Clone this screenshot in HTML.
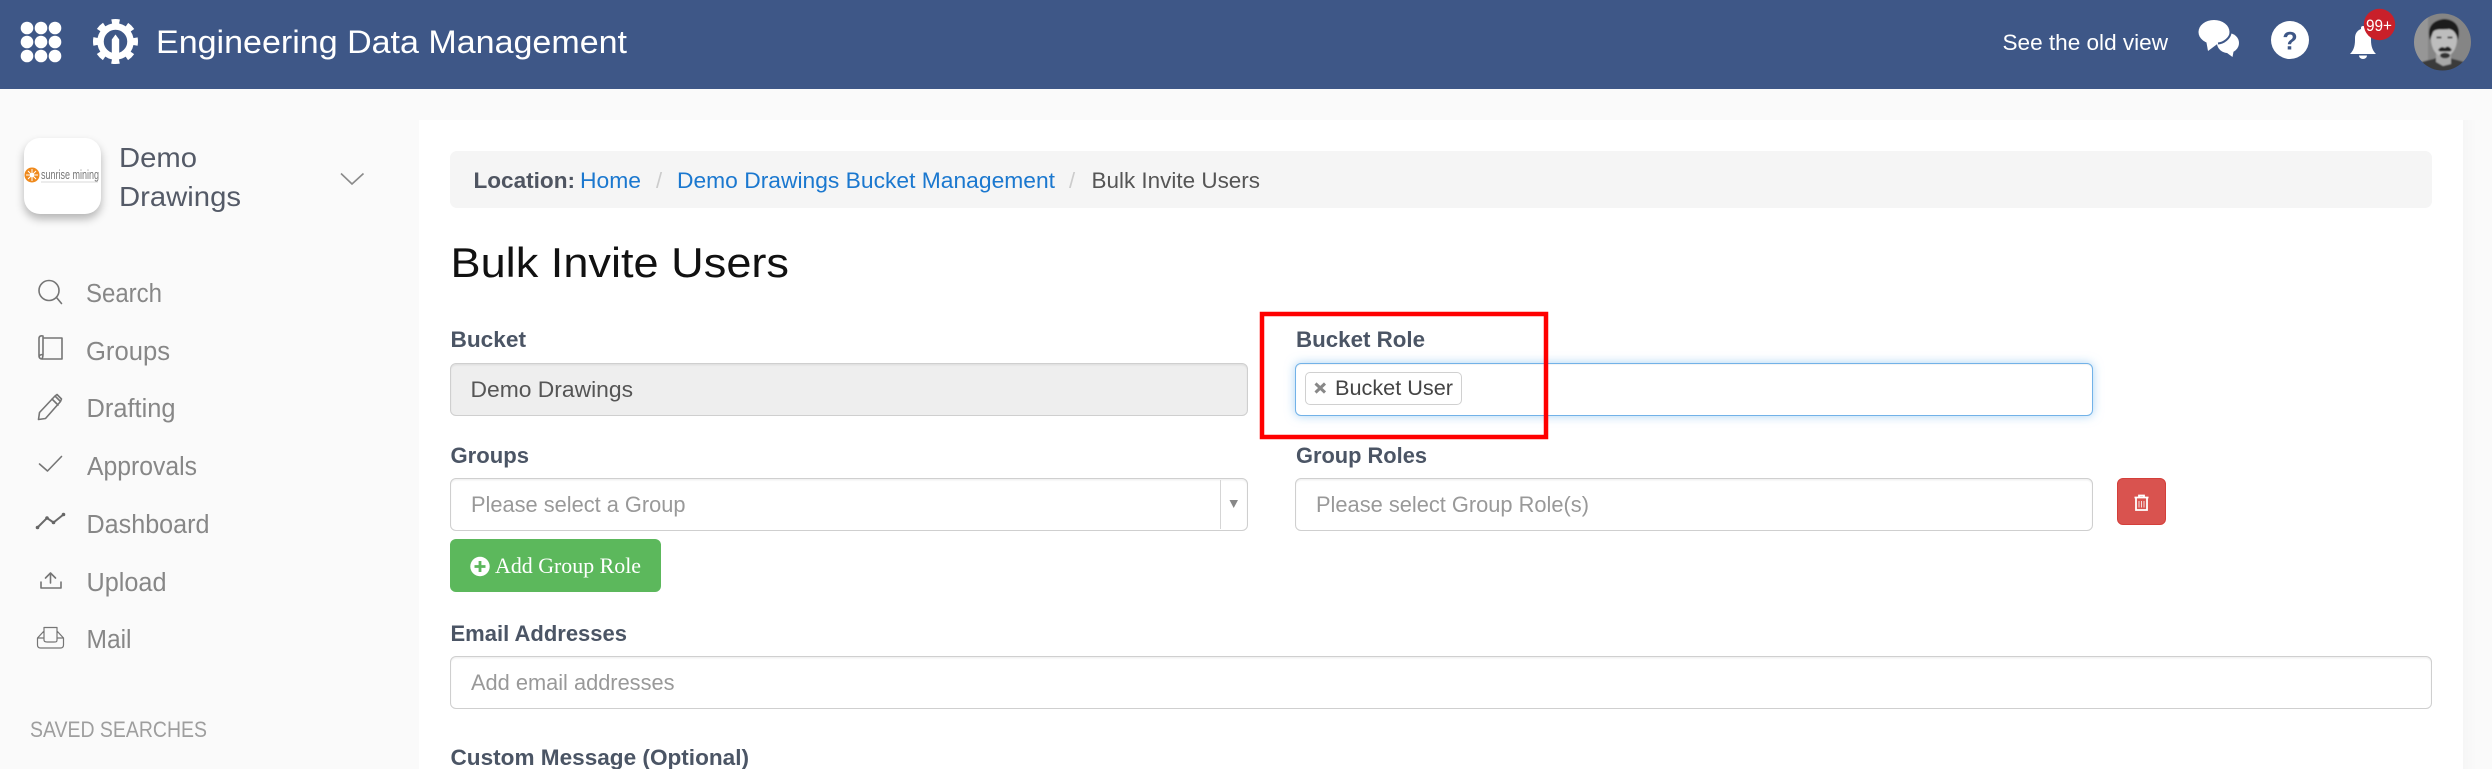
<!DOCTYPE html>
<html lang="en"><head><meta charset="utf-8"><title>Bulk Invite Users</title>
<style>
html,body{margin:0;padding:0;width:2492px;height:769px;overflow:hidden;background:#fafafa}
.b{position:absolute;box-sizing:border-box}
.in{background:#fff;border:1.5px solid #cfcfcf;border-radius:6px;box-shadow:inset 0 1.5px 1.5px rgba(0,0,0,.06)}
svg{position:absolute;left:0;top:0}
text{font-family:"Liberation Sans",sans-serif;white-space:pre}
.l{font-weight:700;font-size:22px;fill:#4b5565}
.n{font-size:25.5px;fill:#878787}
.t{font-size:22px;fill:#555}
.p{font-size:22px;fill:#999}
.a{font-size:22px;fill:#1b78cf}
.ic{fill:none;stroke:#757575;stroke-width:1.6;stroke-linecap:round;stroke-linejoin:round}
</style></head><body>
<div class="b" style="left:0;top:0;width:2492px;height:89px;background:#3e5787"></div>
<div class="b" style="left:419px;top:120px;width:2044px;height:649px;background:#fff"></div>
<div class="b" style="left:2463px;top:120px;width:14px;height:649px;background:linear-gradient(90deg,#f6f6f6,#fafafa)"></div>
<div class="b" style="left:450px;top:151px;width:1982px;height:57px;background:#f5f5f5;border-radius:7px"></div>
<div class="b in" style="left:450px;top:363px;width:798px;height:53px;background:#eee"></div>
<div class="b in" style="left:1295px;top:363px;width:798px;height:53px;border-color:#72b2e8;box-shadow:inset 0 1px 1px rgba(0,0,0,.05),0 0 10px rgba(102,175,233,.55)"></div>
<div class="b" style="left:1305px;top:372px;width:157px;height:33px;background:#fff;border:1.5px solid #d0d0d0;border-radius:5px"></div>
<div class="b in" style="left:450px;top:478px;width:798px;height:53px"></div>
<div class="b" style="left:1220px;top:480px;width:1px;height:49px;background:#d5d5d5"></div>
<div class="b in" style="left:1295px;top:478px;width:798px;height:53px"></div>
<div class="b" style="left:2117px;top:478px;width:49px;height:47px;background:#d9534f;border:1.5px solid #d43f3a;border-radius:6px"></div>
<div class="b" style="left:450px;top:539px;width:211px;height:53px;background:#5cb85c;border-radius:6px"></div>
<div class="b in" style="left:450px;top:656px;width:1982px;height:53px"></div>
<div class="b" style="left:24px;top:138px;width:77px;height:76px;background:#fff;border-radius:16px;box-shadow:0 5px 9px rgba(0,0,0,.28)"></div>

<svg width="2492" height="769" viewBox="0 0 2492 769" xmlns="http://www.w3.org/2000/svg">
<defs><clipPath id="av"><circle cx="2442.5" cy="42" r="28.5"/></clipPath>
<filter id="bl" x="-5%" y="-5%" width="110%" height="110%"><feGaussianBlur stdDeviation="0.8"/></filter></defs>
<!-- app grid -->
<g fill="#fff">
<circle cx="27" cy="28" r="6.3"/><circle cx="41" cy="28" r="6.3"/><circle cx="55" cy="28" r="6.3"/>
<circle cx="27" cy="42" r="6.3"/><circle cx="41" cy="42" r="6.3"/><circle cx="55" cy="42" r="6.3"/>
<circle cx="27" cy="56" r="6.3"/><circle cx="41" cy="56" r="6.3"/><circle cx="55" cy="56" r="6.3"/>
</g>
<!-- gear logo -->
<circle cx="115.5" cy="41.5" r="20" fill="none" stroke="#fff" stroke-width="5" stroke-dasharray="7.7 8" stroke-dashoffset="3.85"/>
<circle cx="115.5" cy="41.500" r="15" fill="none" stroke="#fff" stroke-width="6.500"/>
<path d="M111.800 55V39.500L115.500 34.500L119.200 39.500V55Z" fill="#fff"/>
<text x="156" y="53" font-size="32" fill="#fff" textLength="471" lengthAdjust="spacingAndGlyphs">Engineering Data Management</text>

<text x="2002.5" y="50" font-size="22" fill="#fff" textLength="165.5" lengthAdjust="spacingAndGlyphs">See the old view</text>
<!-- chat -->
<ellipse cx="2228" cy="43" rx="11" ry="10" fill="#fff"/>
<path d="M2223 50L2232.5 57L2234 49Z" fill="#fff"/>
<path d="M2206 40L2208 51L2220 42Z" fill="#fff"/>
<ellipse cx="2214" cy="32" rx="15.5" ry="12" fill="#fff"/>
<path d="M2218 43.5C2224 43 2230 38 2230.5 33" fill="none" stroke="#3e5787" stroke-width="2"/>
<!-- help -->
<circle cx="2290" cy="40" r="19" fill="#fff"/>
<text x="2290" y="49.5" font-size="25" font-weight="700" fill="#3e5787" text-anchor="middle">?</text>
<!-- bell -->
<path d="M2350 54C2353 51 2355 47 2355 40V38C2355 33 2358 30 2361 29V28A2 2 0 0 1 2365 28V29C2368 30 2371 33 2371 38V40C2371 47 2373 51 2376 54Z" fill="#fff"/>
<path d="M2359 55.5A4 3.5 0 0 0 2367 55.5Z" fill="#fff"/>
<circle cx="2379.5" cy="24.5" r="15.7" fill="#c9202a"/>
<text x="2366" y="31" font-size="17" fill="#fff" textLength="26" lengthAdjust="spacingAndGlyphs">99+</text>
<!-- avatar -->
<g clip-path="url(#av)"><g filter="url(#bl)">
<rect x="2412" y="11" width="62" height="62" fill="#858585"/>
<rect x="2412" y="11" width="16" height="62" fill="#969696"/>
<path d="M2412 72V66C2424 60 2432 60 2436 58H2450C2456 60 2464 61 2472 66V72Z" fill="#3a3a3a"/>
<path d="M2436 50H2451V64L2443 66L2436 62Z" fill="#a8a8a8"/>
<ellipse cx="2444" cy="39" rx="13" ry="18" fill="#bdbdbd"/>
<path d="M2430 40C2426 26 2434 20 2444 19C2454 19 2462 26 2458 40C2456 33 2454 30 2449 29C2442 30 2436 28 2433 32Z" fill="#1c1c1c"/>
<path d="M2436.500 37.500H2441.500M2447.500 37.500H2452.500" stroke="#444" stroke-width="2"/>
<path d="M2438 50C2441 46 2443 47 2445 48C2447 46 2449 46 2452 50L2450 51.500H2440Z" fill="#222"/>
<ellipse cx="2445" cy="55.500" rx="5" ry="2.800" fill="#333"/>
</g></g>

<!-- sidebar -->
<circle cx="32" cy="175" r="7.5" fill="#ef8a1d"/>
<circle cx="32" cy="175" r="2.6" fill="#fff"/>
<path d="M32 169V172M32 178V181M26 175H29M35 175H38M28 171L30 173M34 177L36 179M36 171L34 173M30 177L28 179" stroke="#fff" stroke-width="1"/>
<text x="41" y="179" font-size="13" fill="#777" textLength="58" lengthAdjust="spacingAndGlyphs">sunrise mining</text>
<path d="M41 182H98" stroke="#d8d8d8" stroke-width="1"/>
<text x="119" y="167" font-size="28" fill="#545a67" textLength="78" lengthAdjust="spacingAndGlyphs">Demo</text>
<text x="119" y="206" font-size="28" fill="#545a67" textLength="122" lengthAdjust="spacingAndGlyphs">Drawings</text>
<path d="M341 173.5L352 184L363.5 173.5" fill="none" stroke="#8a8a8a" stroke-width="1.6"/>

<circle class="ic" cx="49" cy="290.5" r="10"/><path class="ic" d="M56.5 297.5L61.5 303.5"/>
<path class="ic" d="M43 338H62V359H42C39.5 359 39 357.5 39 355.5V338.5C39 336 41 335.500 43 336V354.500C41 354.500 39.500 355 39 356.500M42 359C43 357 43 355.500 43 354.500"/>
<path class="ic" d="M38.500 419.500L39.500 412.500L55 396L60.500 401.500L45.500 418.500ZM52 399L58 405M55 396L57 394.500L61.500 399L60.500 401.500"/>
<path class="ic" d="M39.500 464L47.500 471L61.500 456.500"/>
<path d="M37.500 527.500L47 518L53.500 522.500L63.500 514.500" fill="none" stroke="#6a6a6a" stroke-width="2"/>
<circle cx="37.500" cy="527.500" r="1.800" fill="#666"/><circle cx="47" cy="518" r="1.800" fill="#666"/><circle cx="53.500" cy="522.500" r="1.800" fill="#666"/><circle cx="63.500" cy="514.500" r="1.800" fill="#666"/>
<path class="ic" d="M41 582V588H61V582M50.500 583V573M45.500 578L50.500 573L55.500 578"/>
<path class="ic" style="stroke-width:1.200" d="M37.500 638L44 631V627.500H57V631L63.500 638V645C63.500 647 62.500 648 60.500 648H40.500C38.500 648 37.500 647 37.500 645ZM37.500 638H44V640C44 642 46 642 47 642H54C56 642 57 642 57 640V638H63.500M44 631V638M57 631V638"/>

<text class="n" x="86" y="302" textLength="76" lengthAdjust="spacingAndGlyphs">Search</text>
<text class="n" x="86" y="360" textLength="84" lengthAdjust="spacingAndGlyphs">Groups</text>
<text class="n" x="86.500" y="417" textLength="89" lengthAdjust="spacingAndGlyphs">Drafting</text>
<text class="n" x="87" y="475" textLength="110" lengthAdjust="spacingAndGlyphs">Approvals</text>
<text class="n" x="86.500" y="533" textLength="123" lengthAdjust="spacingAndGlyphs">Dashboard</text>
<text class="n" x="86.500" y="591" textLength="80" lengthAdjust="spacingAndGlyphs">Upload</text>
<text class="n" x="86.500" y="648" textLength="45" lengthAdjust="spacingAndGlyphs">Mail</text>
<text x="30" y="737" font-size="22" fill="#9e9e9e" textLength="177" lengthAdjust="spacingAndGlyphs">SAVED SEARCHES</text>

<!-- breadcrumb -->
<text class="l" x="473.500" y="188" textLength="101.500" lengthAdjust="spacingAndGlyphs" style="fill:#4f5561">Location:</text>
<text class="a" x="580" y="188" textLength="61" lengthAdjust="spacingAndGlyphs">Home</text>
<text x="656" y="188" font-size="22" fill="#ccc">/</text>
<text class="a" x="677" y="188" textLength="378" lengthAdjust="spacingAndGlyphs">Demo Drawings Bucket Management</text>
<text x="1069" y="188" font-size="22" fill="#ccc">/</text>
<text class="t" x="1091.500" y="188" textLength="168.500" lengthAdjust="spacingAndGlyphs">Bulk Invite Users</text>
<text x="450.500" y="277" font-size="42" fill="#111" textLength="338.500" lengthAdjust="spacingAndGlyphs">Bulk Invite Users</text>

<!-- form -->
<text class="l" x="450.500" y="347" textLength="75.500" lengthAdjust="spacingAndGlyphs">Bucket</text>
<text class="t" x="470.500" y="397" textLength="162.500" lengthAdjust="spacingAndGlyphs">Demo Drawings</text>
<text class="l" x="1296" y="347" textLength="129" lengthAdjust="spacingAndGlyphs">Bucket Role</text>
<path d="M1315.500 383.500L1325 392.500M1325 383.500L1315.500 392.500" stroke="#888" stroke-width="3"/>
<text x="1335" y="395" font-size="21.500" fill="#444" textLength="118" lengthAdjust="spacingAndGlyphs">Bucket User</text>
<text class="l" x="450.500" y="463" textLength="78.500" lengthAdjust="spacingAndGlyphs">Groups</text>
<text class="p" x="471" y="512" textLength="214.500" lengthAdjust="spacingAndGlyphs">Please select a Group</text>
<path d="M1229.500 500H1238L1233.700 508Z" fill="#888"/>
<text class="l" x="1296" y="463" textLength="131" lengthAdjust="spacingAndGlyphs">Group Roles</text>
<text class="p" x="1316" y="512" textLength="273" lengthAdjust="spacingAndGlyphs">Please select Group Role(s)</text>
<!-- trash -->
<path d="M2134.500 497.500H2148.500M2139 497V495.500H2144V497M2136 498V510H2147V498" fill="none" stroke="#fff" stroke-width="1.800"/>
<path d="M2139 501V507.500M2141.500 501V507.500M2144 501V507.500" stroke="#f3dcdc" stroke-width="1"/>
<!-- add button -->
<circle cx="480" cy="566.500" r="9.700" fill="#fff"/>
<path d="M480 561V572M474.500 566.500H485.500" stroke="#5cb85c" stroke-width="2.800"/>
<text x="495" y="573" font-size="22" fill="#fff" style="font-family:'Liberation Serif',serif" textLength="146" lengthAdjust="spacingAndGlyphs">Add Group Role</text>
<text class="l" x="450.500" y="641" textLength="176.500" lengthAdjust="spacingAndGlyphs">Email Addresses</text>
<text class="p" x="471" y="690" textLength="203.500" lengthAdjust="spacingAndGlyphs">Add email addresses</text>
<text class="l" x="450.500" y="765" textLength="298.500" lengthAdjust="spacingAndGlyphs">Custom Message (Optional)</text>
<!-- annotation -->
<rect x="1262" y="314" width="284" height="123" fill="none" stroke="#f00" stroke-width="4.500"/>
</svg>
</body></html>
